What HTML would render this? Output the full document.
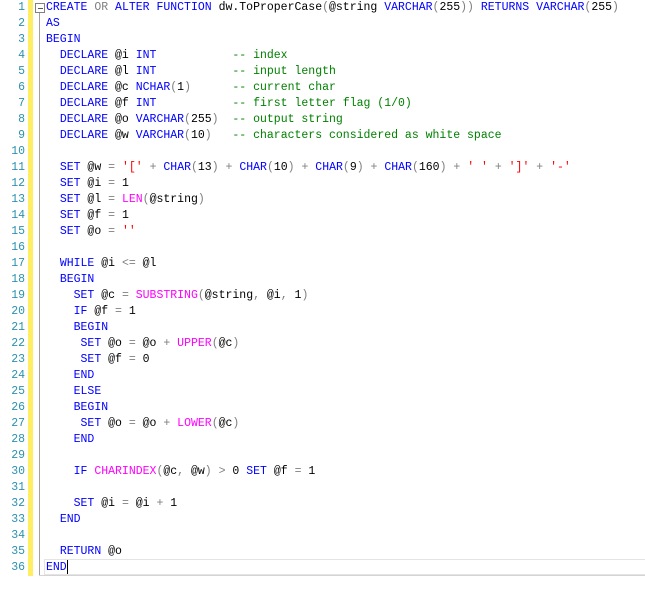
<!DOCTYPE html>
<html><head><meta charset="utf-8"><style>
html,body{margin:0;padding:0;background:#fff;width:645px;height:594px;overflow:hidden}
body{position:relative;font-family:"Liberation Mono",monospace;font-size:11.5px}
.ln{position:absolute;left:0;width:25px;text-align:right;color:#2B91AF;height:16px;line-height:16px}
.yb{position:absolute;left:28px;top:0;width:5px;height:576px;background:#FFEE62}
.vl{position:absolute;left:39px;top:8px;width:1px;height:568px;background:#a0a0a0}
.bb{position:absolute;left:39px;top:575px;width:606px;height:1px;background:#d4d4d4}
.fold{position:absolute;left:35px;top:3px;width:8px;height:8px;border:1px solid #808080;background:#fff}
.fold:after{content:"";position:absolute;left:2px;top:4px;width:5px;height:1px;background:#555}
.code{position:absolute;left:46px;top:0;line-height:16px;color:#000}
.code div{height:16px;white-space:pre}
.k{color:#0000FF}.g{color:#808080}.m{color:#FF00FF}.s{color:#FF0000}.c{color:#008000}
.cur{position:absolute;left:44px;top:559px;width:601px;height:16px;border:1px solid #e4e4e4;box-sizing:border-box;border-right:none}
.caret{position:absolute;left:67px;top:560px;width:1px;height:14px;background:#000}
</style></head><body>
<div class="yb"></div><div class="vl"></div><div class="bb"></div><div class="cur"></div>
<div class="fold"></div>
<div class="code">
<div><span class="k">CREATE</span> <span class="g">OR</span> <span class="k">ALTER FUNCTION</span> dw.ToProperCase<span class="g">(</span>@string <span class="k">VARCHAR</span><span class="g">(</span>255<span class="g">))</span> <span class="k">RETURNS VARCHAR</span><span class="g">(</span>255<span class="g">)</span></div>
<div><span class="k">AS</span></div>
<div><span class="k">BEGIN</span></div>
<div>  <span class="k">DECLARE</span> @i <span class="k">INT</span>           <span class="c">-- index</span></div>
<div>  <span class="k">DECLARE</span> @l <span class="k">INT</span>           <span class="c">-- input length</span></div>
<div>  <span class="k">DECLARE</span> @c <span class="k">NCHAR</span><span class="g">(</span>1<span class="g">)</span>      <span class="c">-- current char</span></div>
<div>  <span class="k">DECLARE</span> @f <span class="k">INT</span>           <span class="c">-- first letter flag (1/0)</span></div>
<div>  <span class="k">DECLARE</span> @o <span class="k">VARCHAR</span><span class="g">(</span>255<span class="g">)</span>  <span class="c">-- output string</span></div>
<div>  <span class="k">DECLARE</span> @w <span class="k">VARCHAR</span><span class="g">(</span>10<span class="g">)</span>   <span class="c">-- characters considered as white space</span></div>
<div> </div>
<div>  <span class="k">SET</span> @w <span class="g">=</span> <span class="s">'['</span> <span class="g">+</span> <span class="k">CHAR</span><span class="g">(</span>13<span class="g">)</span> <span class="g">+</span> <span class="k">CHAR</span><span class="g">(</span>10<span class="g">)</span> <span class="g">+</span> <span class="k">CHAR</span><span class="g">(</span>9<span class="g">)</span> <span class="g">+</span> <span class="k">CHAR</span><span class="g">(</span>160<span class="g">)</span> <span class="g">+</span> <span class="s">' '</span> <span class="g">+</span> <span class="s">']'</span> <span class="g">+</span> <span class="s">'-'</span></div>
<div>  <span class="k">SET</span> @i <span class="g">=</span> 1</div>
<div>  <span class="k">SET</span> @l <span class="g">=</span> <span class="m">LEN</span><span class="g">(</span>@string<span class="g">)</span></div>
<div>  <span class="k">SET</span> @f <span class="g">=</span> 1</div>
<div>  <span class="k">SET</span> @o <span class="g">=</span> <span class="s">''</span></div>
<div> </div>
<div>  <span class="k">WHILE</span> @i <span class="g">&lt;=</span> @l</div>
<div>  <span class="k">BEGIN</span></div>
<div>    <span class="k">SET</span> @c <span class="g">=</span> <span class="m">SUBSTRING</span><span class="g">(</span>@string<span class="g">,</span> @i<span class="g">,</span> 1<span class="g">)</span></div>
<div>    <span class="k">IF</span> @f <span class="g">=</span> 1</div>
<div>    <span class="k">BEGIN</span></div>
<div>     <span class="k">SET</span> @o <span class="g">=</span> @o <span class="g">+</span> <span class="m">UPPER</span><span class="g">(</span>@c<span class="g">)</span></div>
<div>     <span class="k">SET</span> @f <span class="g">=</span> 0</div>
<div>    <span class="k">END</span></div>
<div>    <span class="k">ELSE</span></div>
<div>    <span class="k">BEGIN</span></div>
<div>     <span class="k">SET</span> @o <span class="g">=</span> @o <span class="g">+</span> <span class="m">LOWER</span><span class="g">(</span>@c<span class="g">)</span></div>
<div>    <span class="k">END</span></div>
<div> </div>
<div>    <span class="k">IF</span> <span class="m">CHARINDEX</span><span class="g">(</span>@c<span class="g">,</span> @w<span class="g">)</span> <span class="g">&gt;</span> 0 <span class="k">SET</span> @f <span class="g">=</span> 1</div>
<div> </div>
<div>    <span class="k">SET</span> @i <span class="g">=</span> @i <span class="g">+</span> 1</div>
<div>  <span class="k">END</span></div>
<div> </div>
<div>  <span class="k">RETURN</span> @o</div>
<div><span class="k">END</span></div>
</div>
<div class="caret"></div>
<div class="ln" style="top:0">1</div><div class="ln" style="top:16px">2</div><div class="ln" style="top:32px">3</div><div class="ln" style="top:48px">4</div><div class="ln" style="top:64px">5</div><div class="ln" style="top:80px">6</div><div class="ln" style="top:96px">7</div><div class="ln" style="top:112px">8</div><div class="ln" style="top:128px">9</div><div class="ln" style="top:144px">10</div><div class="ln" style="top:160px">11</div><div class="ln" style="top:176px">12</div><div class="ln" style="top:192px">13</div><div class="ln" style="top:208px">14</div><div class="ln" style="top:224px">15</div><div class="ln" style="top:240px">16</div><div class="ln" style="top:256px">17</div><div class="ln" style="top:272px">18</div><div class="ln" style="top:288px">19</div><div class="ln" style="top:304px">20</div><div class="ln" style="top:320px">21</div><div class="ln" style="top:336px">22</div><div class="ln" style="top:352px">23</div><div class="ln" style="top:368px">24</div><div class="ln" style="top:384px">25</div><div class="ln" style="top:400px">26</div><div class="ln" style="top:416px">27</div><div class="ln" style="top:432px">28</div><div class="ln" style="top:448px">29</div><div class="ln" style="top:464px">30</div><div class="ln" style="top:480px">31</div><div class="ln" style="top:496px">32</div><div class="ln" style="top:512px">33</div><div class="ln" style="top:528px">34</div><div class="ln" style="top:544px">35</div><div class="ln" style="top:560px">36</div>
</body></html>
